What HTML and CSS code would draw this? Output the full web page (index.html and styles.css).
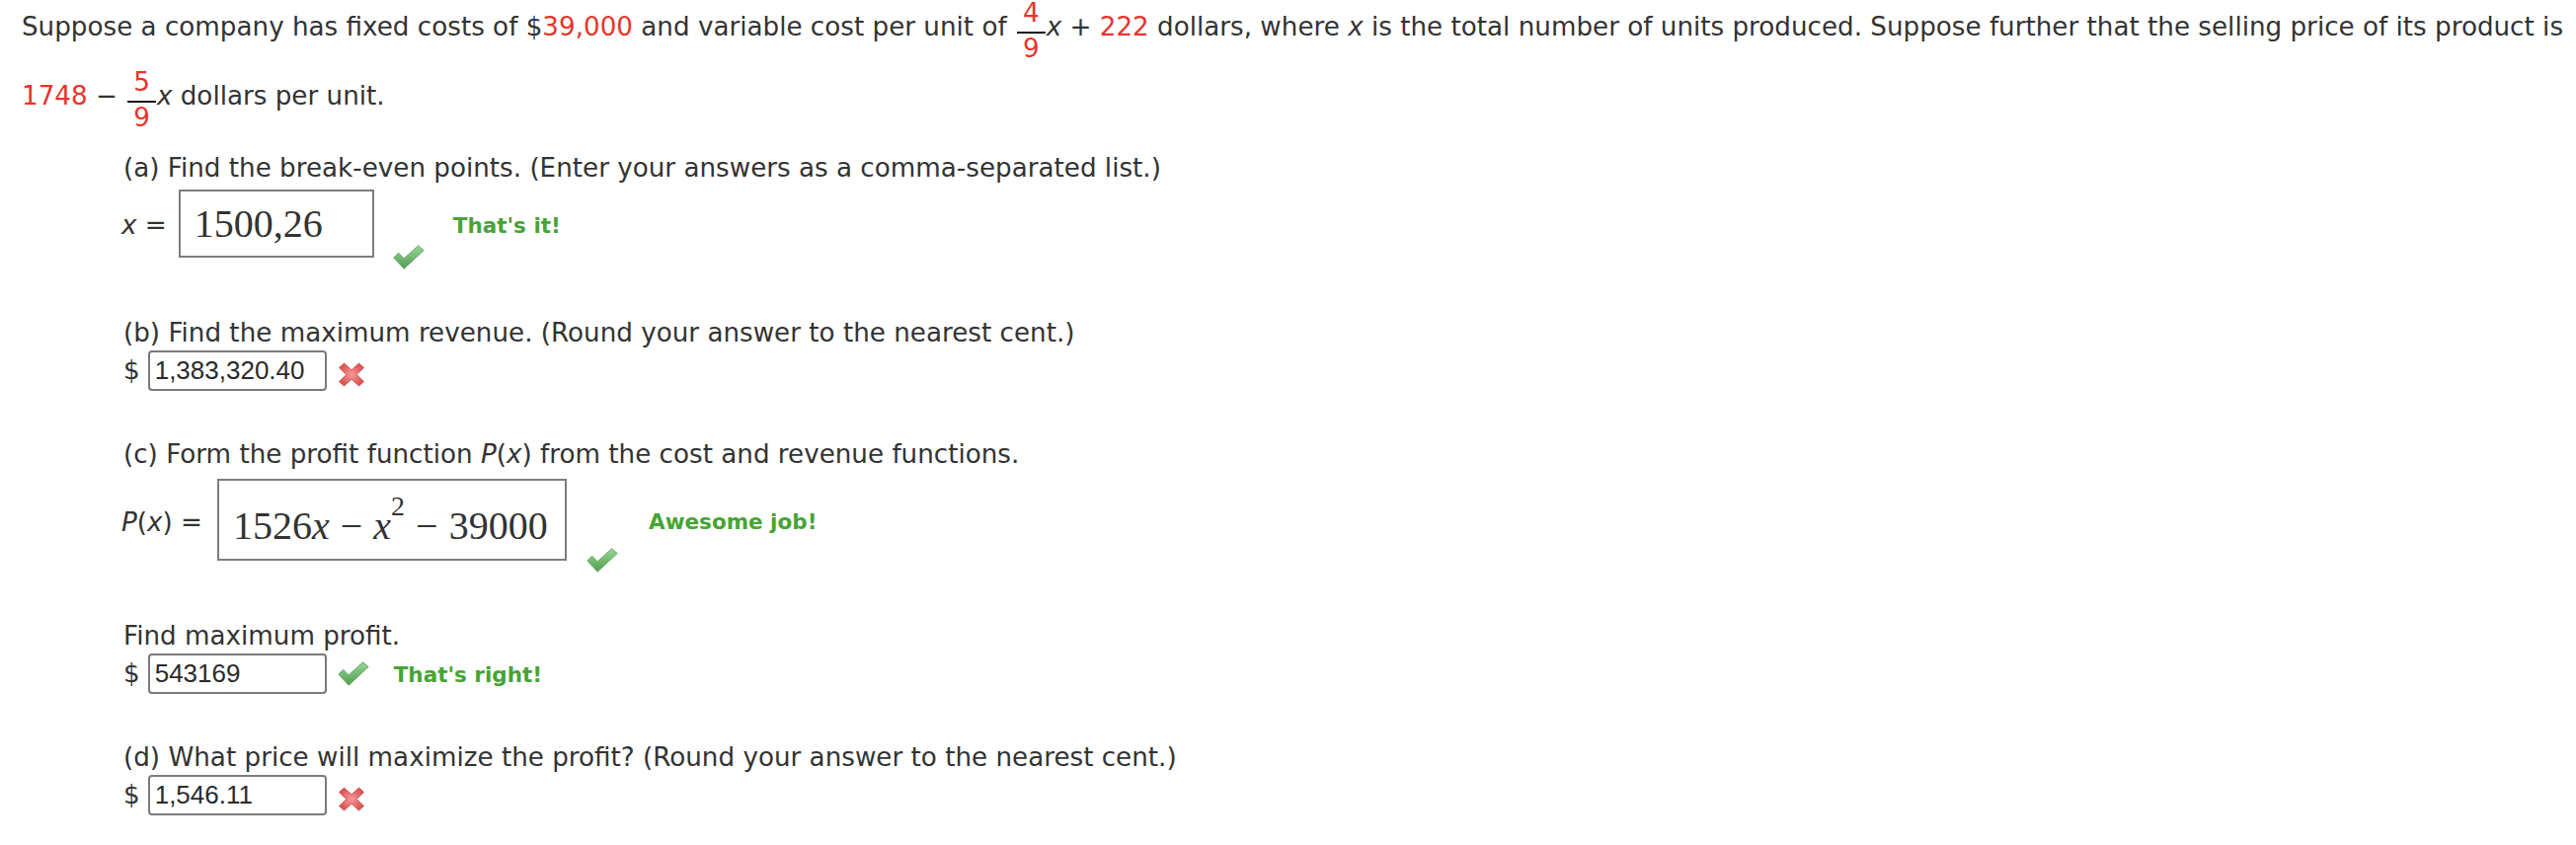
FILE: index.html
```html
<!DOCTYPE html>
<html lang="en">
<head>
<meta charset="utf-8">
<title>Break-even problem</title>
<link rel="stylesheet" href="styles.css">
</head>
<body>
<svg class="defs" width="0" height="0" aria-hidden="true">
  <defs>
    <linearGradient id="chk" x1="0" y1="0" x2="0" y2="1">
      <stop offset="0" stop-color="#9ad69a"/>
      <stop offset="1" stop-color="#4f9f4f"/>
    </linearGradient>
    <radialGradient id="crs" cx="0.5" cy="0.5" r="0.6">
      <stop offset="0" stop-color="#f39a9a"/>
      <stop offset="1" stop-color="#d94848"/>
    </radialGradient>
  </defs>
</svg>
<div class="page">
  <div class="stem">
    <div class="stem-line">Suppose a company has fixed costs of $<span class="red">39,000</span> and variable cost per unit of <span class="frac"><span class="num red">4</span><span class="den red">9</span></span><i>x</i> + <span class="red">222</span> dollars, where <i>x</i> is the total number of units produced. Suppose further that the selling price of its product is</div>
    <div class="stem-line stem-line-2"><span class="red">1748</span> − <span class="frac"><span class="num red">5</span><span class="den red">9</span></span><i>x</i> dollars per unit.</div>
  </div>

  <div class="parts">
    <section class="part part-a">
      <div class="q">(a) Find the break-even points. (Enter your answers as a comma-separated list.)</div>
      <div class="row row-big">
        <span class="lbl lbl-x"><i>x</i> =</span>
        <span class="mbox mbox-a">1500,26</span>
        <svg class="ico check check-big" viewBox="0 0 32 25" width="32" height="25"><path d="M0.8 13 L5.6 8.2 L11.2 13.8 L25.6 0.8 L31.2 5.6 L11.2 24.2 Z" fill="url(#chk)" stroke="#5a9a5a" stroke-width="0.8" stroke-linejoin="round"/></svg>
        <span class="fb fb-big">That's it!</span>
      </div>
    </section>

    <section class="part part-b">
      <div class="q">(b) Find the maximum revenue. (Round your answer to the nearest cent.)</div>
      <div class="row row-small">
        <span class="dollar">$</span>
        <span class="ibox">1,383,320.40</span>
        <svg class="ico cross" viewBox="0 0 28 25" width="28" height="25"><path d="M1.5 5.5 L6.5 1 L14 7.8 L21.5 1 L26.5 5.5 L19.2 12.5 L26.5 19.5 L21.5 24 L14 17.2 L6.5 24 L1.5 19.5 L8.8 12.5 Z" fill="url(#crs)" stroke="#d04a4a" stroke-width="0.8" stroke-linejoin="round"/></svg>
      </div>
    </section>

    <section class="part part-c">
      <div class="q">(c) Form the profit function <i>P</i>(<i>x</i>) from the cost and revenue functions.</div>
      <div class="row row-big">
        <span class="lbl lbl-p"><i>P</i>(<i>x</i>) =</span>
        <span class="mbox mbox-c">1526<i>x</i><span class="op">−</span><i>x</i><span class="sup">2</span><span class="op">−</span>39000</span>
        <svg class="ico check check-big" viewBox="0 0 32 25" width="32" height="25"><path d="M0.8 13 L5.6 8.2 L11.2 13.8 L25.6 0.8 L31.2 5.6 L11.2 24.2 Z" fill="url(#chk)" stroke="#5a9a5a" stroke-width="0.8" stroke-linejoin="round"/></svg>
        <span class="fb fb-big">Awesome job!</span>
      </div>
    </section>

    <section class="part part-m">
      <div class="q">Find maximum profit.</div>
      <div class="row row-small">
        <span class="dollar">$</span>
        <span class="ibox">543169</span>
        <svg class="ico check check-small" viewBox="0 0 32 25" width="32" height="25"><path d="M0.8 13 L5.6 8.2 L11.2 13.8 L25.6 0.8 L31.2 5.6 L11.2 24.2 Z" fill="url(#chk)" stroke="#5a9a5a" stroke-width="0.8" stroke-linejoin="round"/></svg>
        <span class="fb fb-small">That's right!</span>
      </div>
    </section>

    <section class="part part-d">
      <div class="q">(d) What price will maximize the profit? (Round your answer to the nearest cent.)</div>
      <div class="row row-small">
        <span class="dollar">$</span>
        <span class="ibox">1,546.11</span>
        <svg class="ico cross" viewBox="0 0 28 25" width="28" height="25"><path d="M1.5 5.5 L6.5 1 L14 7.8 L21.5 1 L26.5 5.5 L19.2 12.5 L26.5 19.5 L21.5 24 L14 17.2 L6.5 24 L1.5 19.5 L8.8 12.5 Z" fill="url(#crs)" stroke="#d04a4a" stroke-width="0.8" stroke-linejoin="round"/></svg>
      </div>
    </section>
  </div>
</div>
</body>
</html>
```

FILE: styles.css
```css
html, body {
  margin: 0;
  padding: 0;
  background: #ffffff;
}

body {
  font-family: "DejaVu Sans", Verdana, sans-serif;
  font-size: 26.2px;
  color: #333333;
}

.defs {
  position: absolute;
  width: 0;
  height: 0;
}

.page {
  padding: 2px 0 0 22px;
}

i {
  font-style: italic;
}

.red {
  color: #e8352c;
}

/* ---------- stem ---------- */
.stem-line {
  line-height: 28px;
  white-space: nowrap;
}

.stem-line-2 {
  margin-top: 12px;
}

.frac {
  display: inline-flex;
  flex-direction: column;
  vertical-align: 14px;
  margin: 0 1px 0 2px;
}

.frac .num,
.frac .den {
  line-height: 22px;
  text-align: center;
}

.frac .num {
  padding: 0 6px 8px;
  border-bottom: 2px solid #111111;
}

.frac .den {
  padding: 4px 6px 0;
}

/* ---------- parts ---------- */
.parts {
  margin-left: 103px;
}

.q {
  line-height: 28px;
  white-space: nowrap;
}

.part-a { margin-top: 26px; }
.part-b,
.part-c,
.part-m,
.part-d { margin-top: 50px; }

.row {
  display: flex;
  align-items: flex-start;
}

.row-big {
  margin-top: 11px;
}

.part-a .row-big {
  margin-top: 8px;
}

.row-small {
  margin-top: 4px;
  align-items: baseline;
}

.lbl {
  line-height: 28px;
  white-space: nowrap;
}

.part-a .lbl {
  margin-top: 22px;
}

.part-c .lbl {
  margin-top: 30px;
}

.lbl-x {
  margin-left: -2px;
  margin-right: 12px;
}

.lbl-p {
  margin-left: -2px;
  margin-right: 15px;
}

/* math boxes */
.mbox {
  box-sizing: border-box;
  border: 2px solid #7d7d7d;
  font-family: "Liberation Serif", "Times New Roman", serif;
  font-size: 40px;
  line-height: 43px;
  color: #333333;
  white-space: nowrap;
}

.mbox-a {
  width: 198px;
  height: 69px;
  padding: 11px 0 0 14px;
}

.mbox-c {
  width: 354px;
  height: 83px;
  padding: 24px 0 0 14px;
}

.mbox .op {
  margin: 0 11px;
}

.mbox .sup {
  font-size: 28px;
  line-height: 0;
  vertical-align: 24px;
  margin-left: 0;
}

/* input boxes */
.dollar {
  line-height: 28px;
  margin-right: 8px;
}

.ibox {
  box-sizing: border-box;
  width: 181px;
  height: 41px;
  border: 2px solid #7a7a7a;
  border-radius: 4px;
  padding-left: 5px;
  font-family: "Liberation Sans", Arial, sans-serif;
  font-size: 26px;
  line-height: 37px;
  color: #2a2a2a;
}

/* icons */
.ico {
  flex: none;
  display: block;
}

.check-big {
  margin-left: 19px;
  align-self: flex-start;
}

.part-a .check-big {
  margin-top: 56px;
}

.part-c .check-big {
  margin-left: 20px;
  margin-top: 70px;
}

.check-small {
  margin-left: 11px;
  align-self: center;
}

.cross {
  margin-left: 11px;
  align-self: flex-start;
  margin-top: 12px;
}

/* feedback */
.fb {
  font-weight: bold;
  font-size: 21.5px;
  line-height: 28px;
  color: #46a435;
  white-space: nowrap;
}

.fb-big {
  margin-left: 29px;
}

.part-a .fb-big {
  margin-top: 23px;
}

.part-c .fb-big {
  margin-left: 31px;
  margin-top: 30px;
}

.fb-small {
  margin-left: 25px;
}
```
